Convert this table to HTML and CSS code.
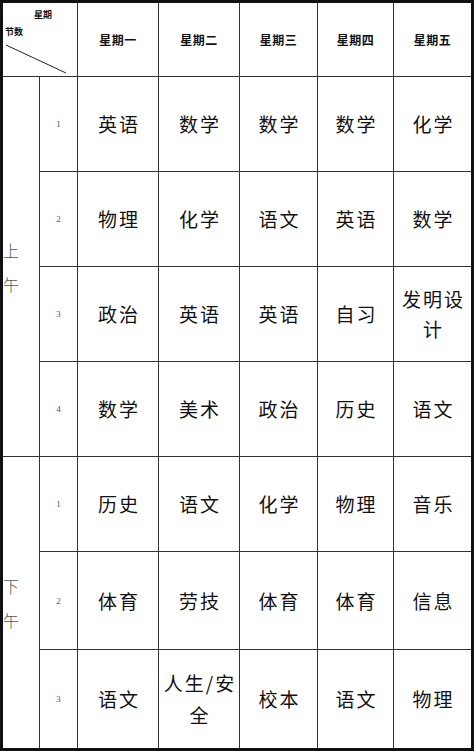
FILE: index.html
```html
<!DOCTYPE html>
<html lang="zh">
<head>
<meta charset="utf-8">
<link rel="stylesheet" href="styles.css">
</head>
<body>
<table class="tt">
  <colgroup>
    <col class="c-sec"><col class="c-per">
    <col class="c-d1"><col class="c-d2"><col class="c-d3"><col class="c-d4"><col class="c-d5">
  </colgroup>
  <tr class="r-head">
    <th colspan="2" class="corner">
      <svg class="diag" width="76" height="75" viewBox="0 0 76 75"><line x1="3" y1="42" x2="63" y2="70" stroke="#222" stroke-width="1"/></svg>
      <span class="lbl-week">星期</span>
      <span class="lbl-sec">节数</span>
    </th>
    <th class="day">星期一</th>
    <th class="day">星期二</th>
    <th class="day">星期三</th>
    <th class="day">星期四</th>
    <th class="day">星期五</th>
  </tr>
  <tr class="r-std">
    <td rowspan="4" class="sec">上<br>午</td>
    <td class="per">1</td>
    <td class="sub">英语</td><td class="sub">数学</td><td class="sub">数学</td><td class="sub">数学</td><td class="sub">化学</td>
  </tr>
  <tr class="r-std">
    <td class="per">2</td>
    <td class="sub">物理</td><td class="sub">化学</td><td class="sub">语文</td><td class="sub">英语</td><td class="sub">数学</td>
  </tr>
  <tr class="r-std">
    <td class="per">3</td>
    <td class="sub">政治</td><td class="sub">英语</td><td class="sub">英语</td><td class="sub">自习</td><td class="sub wrap w-30">发明设计</td>
  </tr>
  <tr class="r-std">
    <td class="per">4</td>
    <td class="sub">数学</td><td class="sub">美术</td><td class="sub">政治</td><td class="sub">历史</td><td class="sub">语文</td>
  </tr>
  <tr class="r-std">
    <td rowspan="3" class="sec">下<br>午</td>
    <td class="per">1</td>
    <td class="sub">历史</td><td class="sub">语文</td><td class="sub">化学</td><td class="sub">物理</td><td class="sub">音乐</td>
  </tr>
  <tr class="r-mid">
    <td class="per">2</td>
    <td class="sub">体育</td><td class="sub">劳技</td><td class="sub">体育</td><td class="sub">体育</td><td class="sub">信息</td>
  </tr>
  <tr class="r-last">
    <td class="per">3</td>
    <td class="sub">语文</td><td class="sub wrap">人生/安全</td><td class="sub">校本</td><td class="sub">语文</td><td class="sub">物理</td>
  </tr>
</table>
</body>
</html>
```
FILE: styles.css
```css
html, body {
  margin: 0;
  padding: 0;
  background: #fff;
}
.tt {
  border-collapse: collapse;
  table-layout: fixed;
  width: 471px;
  border: 3px solid #111;
  font-family: "Noto Sans CJK SC", "Liberation Serif", serif;
  color: #111;
}
.c-sec { width: 38px; }
.c-per { width: 38px; }
.c-d1 { width: 81px; }
.c-d2 { width: 81px; }
.c-d3 { width: 78px; }
.c-d4 { width: 76px; }
.c-d5 { width: 79px; }
.tt th, .tt td {
  border: 1px solid #333;
  padding: 0;
  text-align: center;
  vertical-align: middle;
}
.r-head { height: 75px; }
.r-std { height: 95px; }
.r-mid { height: 98px; }
.r-last { height: 100px; }
.tt .corner {
  position: relative;
}
.diag {
  position: absolute;
  left: 0;
  top: 0;
}
.lbl-week {
  position: absolute;
  left: 31px;
  top: 6px;
  font-size: 9px;
  font-weight: 700;
  line-height: 12px;
}
.lbl-sec {
  position: absolute;
  left: 2px;
  top: 23px;
  font-size: 9px;
  font-weight: 700;
  line-height: 12px;
}
.tt .day {
  font-size: 12px;
  font-weight: 700;
  letter-spacing: 0.5px;
}
.tt .sec {
  text-align: left;
  padding-left: 0;
  font-size: 16px;
  line-height: 34px;
  color: #555;
  font-weight: 300;
}
.tt .per {
  font-family: "Liberation Serif", serif;
  font-size: 9px;
  color: #555;
}
.tt .sub {
  font-size: 19px;
  letter-spacing: 2px;
  line-height: 32px;
  padding-left: 2px;
}
.tt .wrap {
  padding: 0 0 0 2px;
  word-break: break-all;
}
.tt .w-30 {
  line-height: 30px;
}
```
